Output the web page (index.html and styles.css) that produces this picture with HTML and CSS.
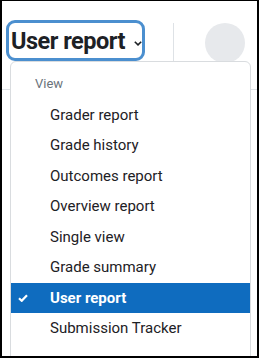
FILE: index.html
```html
<!DOCTYPE html>
<html>
<head>
<meta charset="utf-8">
<link rel="stylesheet" href="styles.css">
</head>
<body>
<div class="frame">
  <header class="top">
    <button class="title-btn"><span class="title-text">User report</span><svg class="chev" width="8" height="5" viewBox="0 0 8 5"><path d="M0.8 0.8 L4 3.9 L7.2 0.8" fill="none" stroke="#1d2125" stroke-width="1.6"/></svg></button>
    <span class="divider"></span>
    <span class="avatar"></span>
  </header>
  <div class="menu">
    <div class="menu-header">View</div>
    <div class="item">Grader report</div>
    <div class="item">Grade history</div>
    <div class="item">Outcomes report</div>
    <div class="item">Overview report</div>
    <div class="item">Single view</div>
    <div class="item">Grade summary</div>
    <div class="item active"><svg class="check" width="10" height="8" viewBox="0 0 10 8"><path d="M1 4.2 L3.7 6.8 L9 1.2" fill="none" stroke="#fff" stroke-width="2.2"/></svg>User report</div>
    <div class="item">Submission Tracker</div>
  </div>
</div>
</body>
</html>
```
FILE: styles.css
```css
html, body {
  margin: 0;
  padding: 0;
  background: #fff;
}
.frame {
  position: relative;
  box-sizing: border-box;
  width: 259px;
  height: 358px;
  border-style: solid;
  border-color: #000;
  border-width: 1px 2px 2px 2px;
  overflow: hidden;
  background: #fff;
  font-family: Roboto, "Liberation Sans", sans-serif;
  color: #1d2125;
}
.top {
  display: flex;
  align-items: flex-start;
  height: 89px;
  box-sizing: border-box;
  padding: 19px 0 0 4px;
  border-bottom: 1px solid #dee2e6;
}
.title-btn {
  box-sizing: border-box;
  flex-shrink: 0;
  width: 139px;
  height: 41px;
  margin: 0;
  padding: 0 0 0 2px;
  display: flex;
  align-items: center;
  overflow: visible;
  background: #fff;
  border: 3px solid #4b8fcf;
  border-radius: 9px;
  font-family: Roboto, "Liberation Sans", sans-serif;
  color: #1d2125;
}
.title-text {
  font-weight: 700;
  font-size: 23.5px;
  letter-spacing: -0.5px;
  white-space: nowrap;
}
.chev {
  flex-shrink: 0;
  margin-left: 9px;
  margin-top: 5px;
}
.divider {
  width: 1px;
  height: 38px;
  margin: 3px 0 0 28px;
  background: #dee2e6;
}
.avatar {
  width: 40px;
  height: 40px;
  margin: 3px 0 0 31px;
  border-radius: 50%;
  background: #e7e9ec;
}
.menu {
  position: absolute;
  top: 60px;
  left: 8px;
  width: 241px;
  height: 320px;
  box-sizing: border-box;
  padding-top: 8px;
  background: #fff;
  border: 1px solid #d9dcdf;
  border-radius: 6px;
}
.menu-header {
  font-size: 13px;
  line-height: 20px;
  padding: 4px 0 5.5px 24px;
  color: #6a737b;
}
.item {
  position: relative;
  font-size: 15px;
  line-height: 22.5px;
  padding: 4px 0 4px 39px;
  white-space: nowrap;
}
.item.active {
  background: #0f6cbf;
  color: #fff;
  font-weight: 700;
}
.check {
  position: absolute;
  left: 7px;
  top: 11px;
}
```
